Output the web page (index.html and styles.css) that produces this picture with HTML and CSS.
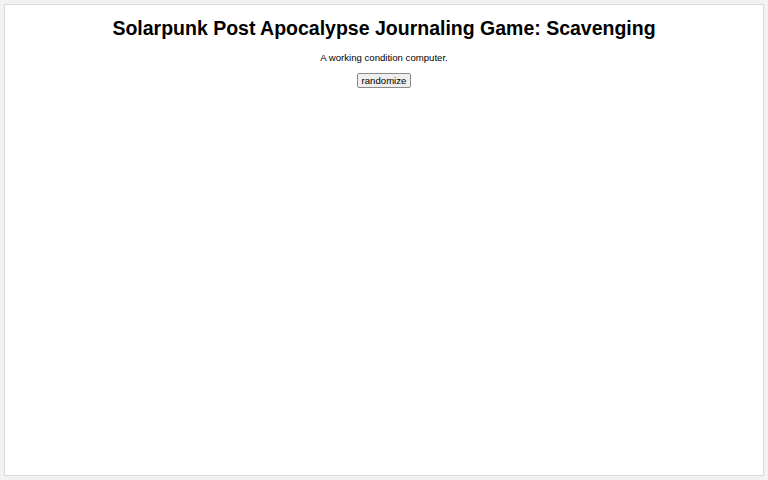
FILE: index.html
```html
<!DOCTYPE html>
<html>
<head>
<meta charset="utf-8">
<link rel="stylesheet" href="styles.css">
</head>
<body>
<div class="card">
  <h1 class="title">Solarpunk Post Apocalypse Journaling Game: Scavenging</h1>
  <p class="result">A working condition computer.</p>
  <button class="btn">randomize</button>
</div>
</body>
</html>
```
FILE: styles.css
```css
html, body { margin: 0; padding: 0; }
body {
  background: #f2f2f2;
  padding: 4px;
  font-family: "Liberation Sans", Arial, sans-serif;
  height: 480px;
  box-sizing: border-box;
}
.card {
  background: #fff;
  border: 1px solid #dcdcdc;
  height: 472px;
  box-sizing: border-box;
  display: flex;
  flex-direction: column;
  align-items: center;
  padding-top: 11px;
}
.title {
  margin: 0;
  font-size: 19.5px;
  font-weight: bold;
  color: #000;
  line-height: 24px;
}
.result {
  margin: 12px 0 0;
  font-size: 9.6px;
  line-height: 12px;
  color: #000;
}
.btn {
  margin-top: 9px;
  font-family: "Liberation Sans", Arial, sans-serif;
  font-size: 9.6px;
  padding: 1px 4px;
  line-height: 11px;
  background: #efefef;
  border: 1px solid #8a8a8a;
  border-radius: 2px;
  color: #000;
}
```
